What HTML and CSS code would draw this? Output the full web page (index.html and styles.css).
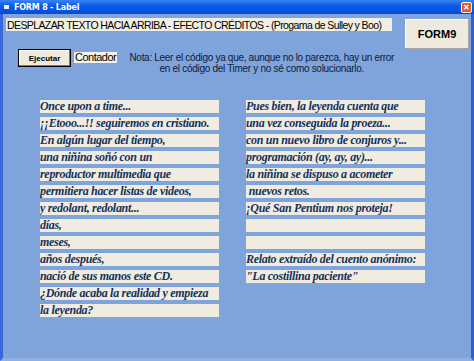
FILE: index.html
```html
<!DOCTYPE html>
<html lang="es">
<head>
    <meta charset="UTF-8">
    <title>FORM 8 - Label</title>
    <link rel="stylesheet" href="styles.css">
</head>
<body>
    <div class="ventana">
        <div class="barra">
            <span class="icono"></span>
            <span class="barra-titulo">FORM 8 - Label</span>
            <span class="cerrar">&#x2715;</span>
        </div>
        <div class="cliente">
            <div class="cabecera">
                <div class="izq">
                    <div class="titulo">DESPLAZAR TEXTO HACIA ARRIBA - EFECTO CRÉDITOS - (Progama de Sulley y Boo)</div>
                    <div class="controles">
                        <button class="boton">Ejecutar</button>
                        <span class="contador">Contador</span>
                        <p class="nota">Nota: Leer el código ya que, aunque no lo parezca, hay un error<br>en el código del Timer y no sé como solucionarlo.</p>
                    </div>
                </div>
                <button class="form9">FORM9</button>
            </div>

            <div class="columnas">
                <ul class="lista">
                    <li>Once upon a time...</li>
                    <li>¡¡Etooo...!! seguiremos en cristiano.</li>
                    <li>En algún lugar del tiempo,</li>
                    <li>una niñina soñó con un</li>
                    <li>reproductor multimedia que</li>
                    <li>permitiera hacer listas de videos,</li>
                    <li>y redolant, redolant...</li>
                    <li>días,</li>
                    <li>meses,</li>
                    <li>años después,</li>
                    <li>nació de sus manos este CD.</li>
                    <li>¿Dónde acaba la realidad y empieza</li>
                    <li>la leyenda?</li>
                </ul>
                <ul class="lista">
                    <li>Pues bien, la leyenda cuenta que</li>
                    <li>una vez conseguida la proeza...</li>
                    <li>con un nuevo libro de conjuros y...</li>
                    <li>programación (ay, ay, ay)...</li>
                    <li>la niñina se dispuso a acometer</li>
                    <li>&nbsp;nuevos retos.</li>
                    <li>¡Qué San Pentium nos proteja!</li>
                    <li></li>
                    <li></li>
                    <li>Relato extraído del cuento anónimo:</li>
                    <li>"La costillina paciente"</li>
                </ul>
            </div>
        </div>
    </div>
</body>
</html>
```

FILE: styles.css
```css
body {
    margin: 0;
    background-color: #7fa3db;
    font-family: "Liberation Sans", Arial, sans-serif;
}

.ventana {
    width: 474px;
    height: 361px;
    display: flex;
    flex-direction: column;
    overflow: hidden;
}

/* Barra de título estilo XP */
.barra {
    height: 14px;
    display: flex;
    align-items: center;
    padding: 0 2px;
    background: linear-gradient(#3a85f5, #0a5ce8 40%, #0552e0 80%, #0a48c8);
    color: #ffffff;
}

.icono {
    width: 5px;
    height: 4px;
    background-color: #e8eef8;
    margin: 0 5px 0 2px;
}

.barra-titulo {
    font-family: "DejaVu Sans", sans-serif;
    font-size: 8px;
    font-weight: bold;
    letter-spacing: -0.2px;
    flex: 1;
}

.cerrar {
    width: 11px;
    height: 11px;
    box-sizing: border-box;
    border: 1px solid #ffffff;
    border-radius: 2px;
    background-color: #e0582e;
    font-size: 8px;
    line-height: 9px;
    text-align: center;
    font-weight: bold;
}

.cliente {
    flex: 1;
    background-color: #7fa3db;
    border-left: 3px solid #3868d8;
    border-right: 3px solid #2f5fd6;
    border-bottom: 3px solid #8fb0e4;
}

.cabecera {
    display: flex;
    justify-content: space-between;
    padding: 4px 2px 0 3px;
}

.izq {
    flex: none;
}

.titulo {
    width: 385px;
    height: 13px;
    background-color: #f1eee2;
    font-size: 10.5px;
    letter-spacing: -0.6px;
    line-height: 14px;
    padding-left: 1px;
    white-space: nowrap;
    overflow: hidden;
}

.controles {
    display: flex;
    align-items: flex-start;
    margin-top: 18px;
    padding-left: 12px;
}

.boton {
    width: 53px;
    height: 18px;
    padding: 0;
    font-family: "Liberation Sans", Arial, sans-serif;
    font-size: 8px;
    font-weight: bold;
    background-color: #eeebde;
    border: 1px solid #000000;
    box-shadow: inset -1px -1px #7b7a74, inset 1px 1px #ffffff;
}

.contador {
    margin: 3px 0 0 3px;
    height: 11px;
    line-height: 11px;
    padding: 0 1px;
    font-size: 11px;
    letter-spacing: -0.5px;
    background-color: #f4f3ee;
}

.nota {
    margin: 3px 0 0 9px;
    width: 271px;
    font-size: 10px;
    letter-spacing: -0.3px;
    line-height: 11px;
    text-align: center;
    white-space: nowrap;
    color: #0d1c3c;
}

.form9 {
    margin-top: 1px;
    width: 64px;
    height: 30px;
    padding: 0;
    font-family: "Liberation Sans", Arial, sans-serif;
    font-size: 11px;
    font-weight: bold;
    background-color: #eeebde;
    border: none;
    box-shadow: inset -1px -1px #a8a69c, inset 1px 1px #ffffff;
}

.columnas {
    display: flex;
    gap: 27px;
    padding: 26px 0 0 37px;
}

.lista {
    list-style: none;
    margin: 0;
    padding: 0;
    width: 179px;
}

.lista li {
    height: 13px;
    margin-bottom: 4px;
    background-color: #f0ecdf;
    font-family: "Liberation Serif", "Times New Roman", serif;
    font-size: 12px;
    font-style: italic;
    font-weight: bold;
    letter-spacing: -0.3px;
    line-height: 13px;
    color: #15315c;
    white-space: nowrap;
    overflow: hidden;
}
```
